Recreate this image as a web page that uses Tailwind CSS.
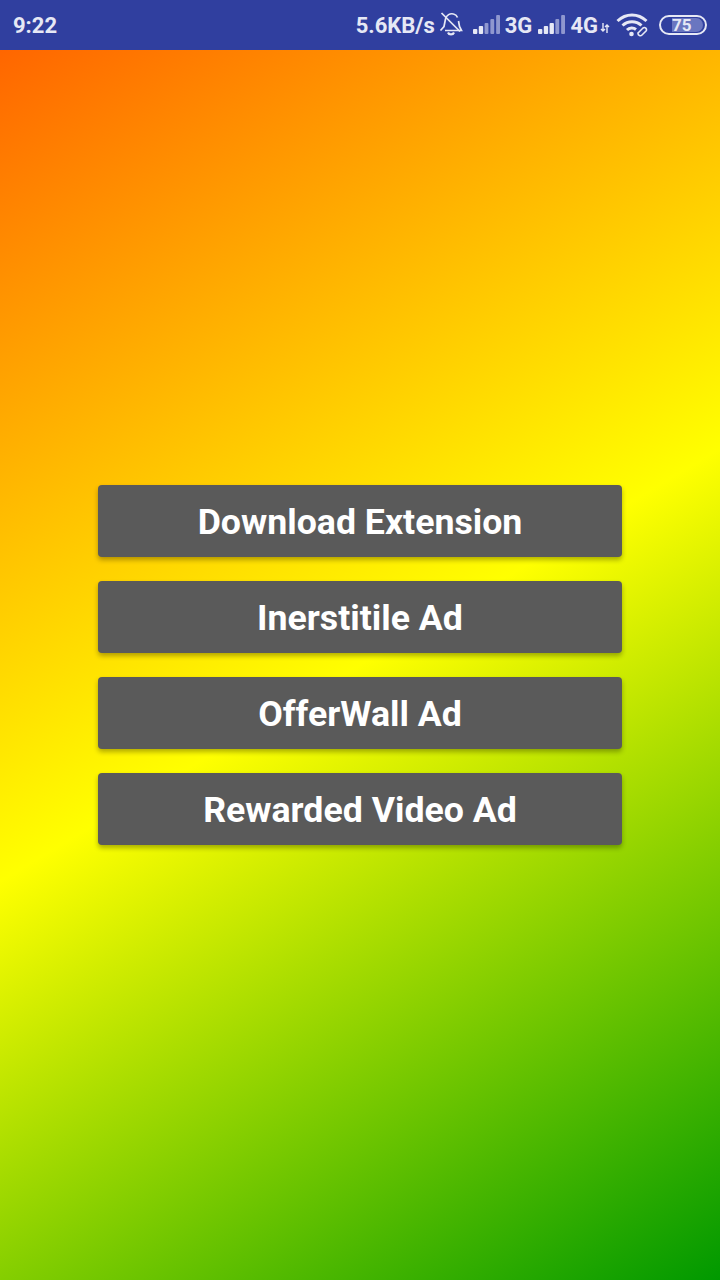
<!DOCTYPE html>
<html lang="en">
<head>
  <meta charset="UTF-8">
  <meta name="viewport" content="width=device-width, initial-scale=1">
  <title>Ads Demo</title>
  <script src="https://cdn.jsdelivr.net/npm/@tailwindcss/browser@4"></script>
</head>
<body class="w-[720px] h-[1280px] overflow-hidden flex flex-col font-['Roboto',sans-serif]">

  <!-- status bar -->
  <div class="h-[50px] shrink-0 bg-[#303f9f] text-[#e6e8f5] flex items-center pl-[13px] pr-[13px] font-bold text-[22px]">
    <span>9:22</span>
    <div class="ml-auto flex items-center">
      <span>5.6KB/s</span>
      <svg class="ml-[4px] mb-[2px]" width="24" height="26" viewBox="0 0 24 26" fill="none" stroke="#e6e8f5" stroke-width="1.7">
        <path d="M1.5 19.5 L5 15.5 L6.5 8 C7.5 4 11 2 14.5 3 C16.5 3.5 18 5 18.5 6.5 M19.5 10 L20.5 15.5 L22.5 19.5 H6"/>
        <path d="M2.5 2 L21 20.5"/>
        <path d="M9 21.5 C10 24 14 24 15 21.5" stroke-width="2.2"/>
      </svg>
      <svg class="ml-[10px]" width="27" height="20" viewBox="0 0 28 20" preserveAspectRatio="none">
        <rect x="0" y="14" width="4.5" height="5" rx="1" fill="#e6e8f5"/>
        <rect x="6" y="11" width="4.5" height="8" rx="1" fill="#e6e8f5"/>
        <rect x="12" y="8" width="4" height="11" rx="1" fill="#8f97cf"/>
        <rect x="18" y="4" width="4" height="15" rx="1" fill="#8f97cf"/>
        <rect x="24" y="0" width="4" height="19" rx="1" fill="#8f97cf"/>
      </svg>
      <span class="ml-[5px]">3G</span>
      <svg class="ml-[6px]" width="27" height="20" viewBox="0 0 28 20" preserveAspectRatio="none">
        <rect x="0" y="14" width="4.5" height="5" rx="1" fill="#e6e8f5"/>
        <rect x="6" y="11" width="4.5" height="8" rx="1" fill="#e6e8f5"/>
        <rect x="12" y="8" width="4.5" height="11" rx="1" fill="#e6e8f5"/>
        <rect x="18" y="4" width="4" height="15" rx="1" fill="#8f97cf"/>
        <rect x="24" y="0" width="4" height="19" rx="1" fill="#8f97cf"/>
      </svg>
      <span class="ml-[5px]">4G</span>
      <svg class="ml-[2px] mt-[6px]" width="10" height="12" viewBox="0 0 10 12" fill="none" stroke="#e6e8f5" stroke-width="1.4">
        <path d="M3 1 V9 M1 7 L3 9 L5 7 M7 11 V3 M5 5 L7 3 L9 5"/>
      </svg>
      <svg class="ml-[6px]" width="34" height="24" viewBox="0 0 34 24" fill="none" stroke="#e6e8f5" stroke-width="3">
        <path d="M1.5 8 C10 0 22 0 30.5 8"/>
        <path d="M6.5 12.5 C12 7.5 20 7.5 25.5 12.5"/>
        <path d="M11 17 C13.5 14.5 17.5 14.5 20 16.5"/>
        <circle cx="15.5" cy="21" r="2.3" fill="#e6e8f5" stroke="none"/>
        <path d="M21.5 20.5 L27 15 C29 13.5 31.5 16 30 18 L26 22 C24.5 23.5 22 22.5 22 20.5" stroke-width="1.6"/>
      </svg>
      <div class="ml-[9px] relative w-[48px] h-[20px] rounded-full border-2 border-[#e6e8f5] flex items-center">
        <div class="absolute top-[1px] bottom-[1px] right-[2px] w-[31px] rounded-r-full bg-[#6a76c0]"></div>
        <span class="relative ml-[11px] text-[17px] leading-none">75</span>
      </div>
    </div>
  </div>

  <!-- gradient area with buttons -->
  <div class="flex-1 bg-[linear-gradient(149deg,#ff6600,#ffff00,#009900)] flex flex-col items-center justify-center gap-6">
    <button class="w-[524px] h-[72px] pt-[4px] bg-[#5a5a5a] rounded-[4px] shadow-[0_3px_5px_rgba(0,0,0,0.3)] text-white font-bold text-[35.7px]">Download Extension</button>
    <button class="w-[524px] h-[72px] pt-[4px] bg-[#5a5a5a] rounded-[4px] shadow-[0_3px_5px_rgba(0,0,0,0.3)] text-white font-bold text-[35.7px]">Inerstitile Ad</button>
    <button class="w-[524px] h-[72px] pt-[4px] bg-[#5a5a5a] rounded-[4px] shadow-[0_3px_5px_rgba(0,0,0,0.3)] text-white font-bold text-[35.7px]">OfferWall Ad</button>
    <button class="w-[524px] h-[72px] pt-[4px] bg-[#5a5a5a] rounded-[4px] shadow-[0_3px_5px_rgba(0,0,0,0.3)] text-white font-bold text-[35.7px]">Rewarded Video Ad</button>
  </div>

</body>
</html>
